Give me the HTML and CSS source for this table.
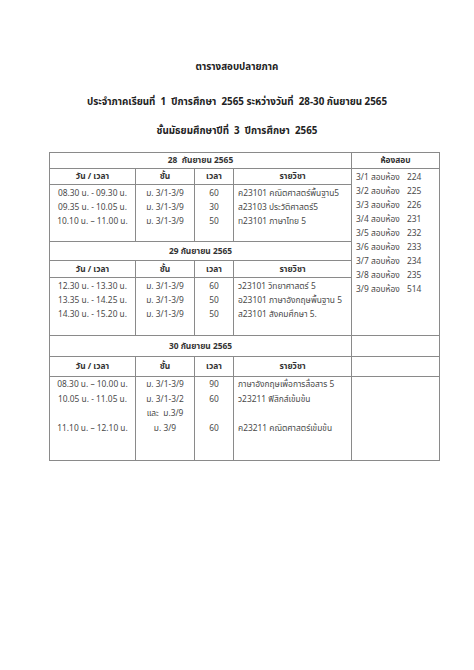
FILE: index.html
```html
<!DOCTYPE html>
<html lang="th">
<head>
<meta charset="utf-8">
<link rel="stylesheet" href="styles.css">
</head>
<body>
<div class="page">
  <h1 class="t1">ตารางสอบปลายภาค</h1>
  <h2 class="t2">ประจำภาคเรียนที่&nbsp; 1&nbsp; ปีการศึกษา&nbsp; 2565 ระหว่างวันที่&nbsp; 28-30 กันยายน 2565</h2>
  <h2 class="t3">ชั้นมัธยมศึกษาปีที่&nbsp; 3&nbsp; ปีการศึกษา&nbsp; 2565</h2>
  <table class="tbl">
    <colgroup>
      <col class="c1"><col class="c2"><col class="c3"><col class="c4"><col class="c5">
    </colgroup>
    <tr class="r-day r1">
      <th colspan="4">28&nbsp; กันยายน 2565</th>
      <th>ห้องสอบ</th>
    </tr>
    <tr class="r-head r2">
      <th>วัน / เวลา</th><th>ชั้น</th><th>เวลา</th><th>รายวิชา</th>
      <td rowspan="5" class="rooms">
        <div><span class="rc">3/1 สอบห้อง</span>224</div>
        <div><span class="rc">3/2 สอบห้อง</span>225</div>
        <div><span class="rc">3/3 สอบห้อง</span>226</div>
        <div><span class="rc">3/4 สอบห้อง</span>231</div>
        <div><span class="rc">3/5 สอบห้อง</span>232</div>
        <div><span class="rc">3/6 สอบห้อง</span>233</div>
        <div><span class="rc">3/7 สอบห้อง</span>234</div>
        <div><span class="rc">3/8 สอบห้อง</span>235</div>
        <div><span class="rc">3/9 สอบห้อง</span>514</div>
      </td>
    </tr>
    <tr class="r-data r3">
      <td class="ctr">08.30 น. - 09.30 น.<br>09.35 น. - 10.05 น.<br>10.10 น. – 11.00 น.</td>
      <td class="ctr">ม. 3/1-3/9<br>ม. 3/1-3/9<br>ม. 3/1-3/9</td>
      <td class="ctr">60<br>30<br>50</td>
      <td class="sub">ค23101 คณิตศาสตร์พื้นฐาน5<br>ส23103 ประวัติศาสตร์5<br>ท23101 ภาษาไทย 5</td>
    </tr>
    <tr class="r-day r4">
      <th colspan="4">29 กันยายน 2565</th>
    </tr>
    <tr class="r-head r5">
      <th>วัน / เวลา</th><th>ชั้น</th><th>เวลา</th><th>รายวิชา</th>
    </tr>
    <tr class="r-data r6">
      <td class="ctr">12.30 น. - 13.30 น.<br>13.35 น. - 14.25 น.<br>14.30 น. - 15.20 น.</td>
      <td class="ctr">ม. 3/1-3/9<br>ม. 3/1-3/9<br>ม. 3/1-3/9</td>
      <td class="ctr">60<br>50<br>50</td>
      <td class="sub">ว23101 วิทยาศาสตร์ 5<br>อ23101 ภาษาอังกฤษพื้นฐาน 5<br>ส23101 สังคมศึกษา 5.</td>
    </tr>
    <tr class="r-day r7">
      <th colspan="4">30 กันยายน 2565</th>
      <td></td>
    </tr>
    <tr class="r-head r8">
      <th>วัน / เวลา</th><th>ชั้น</th><th>เวลา</th><th>รายวิชา</th>
      <td></td>
    </tr>
    <tr class="r-data r9">
      <td class="ctr">08.30 น. – 10.00 น.<br>10.05 น. - 11.05 น.<br>&nbsp;<br>11.10 น. – 12.10 น.</td>
      <td class="ctr">ม. 3/1-3/9<br>ม. 3/1-3/2<br>และ&nbsp; ม.3/9<br>ม. 3/9</td>
      <td class="ctr">90<br>60<br>&nbsp;<br>60</td>
      <td class="sub">ภาษาอังกฤษเพื่อการสื่อสาร 5<br>ว23211 ฟิสิกส์เข้มข้น<br>&nbsp;<br>ค23211 คณิตศาสตร์เข้มข้น</td>
      <td></td>
    </tr>
  </table>
</div>
</body>
</html>
```
FILE: styles.css
```css
html, body {
  margin: 0;
  padding: 0;
  background: #ffffff;
}
body {
  font-family: "Noto Sans Thai", "Loma", "Garuda", "Tahoma", "Noto Sans", sans-serif;
  color: #4a4a4a;
}
.page {
  width: 474px;
  height: 670px;
  padding-top: 58px;
  box-sizing: border-box;
}
.t1, .t2, .t3 {
  margin: 0;
  text-align: center;
  font-weight: bold;
  color: #222;
  font-size: 9.8px;
  line-height: 18px;
}
.t2 { margin-top: 17px; }
.t3 { margin-top: 11px; }
.tbl {
  margin-top: 12px;
  margin-left: 49px;
  width: 390px;
  border-collapse: collapse;
  table-layout: fixed;
  font-size: 8.4px;
}
.c1 { width: 86px; }
.c2 { width: 59px; }
.c3 { width: 39px; }
.c4 { width: 118px; }
.c5 { width: 88px; }
.tbl th, .tbl td {
  border: 1px solid #8a8a8a;
  padding: 0;
  vertical-align: top;
}
.tbl th {
  font-weight: bold;
  color: #333;
  text-align: center;
  vertical-align: middle;
}
.r1 { height: 16px; }
.r2 { height: 16px; }
.r3 { height: 57px; }
.r4 { height: 19px; }
.r5 { height: 17px; }
.r6 { height: 58px; }
.r7 { height: 21px; }
.r8 { height: 20px; }
.r9 { height: 84px; }
.r-data td {
  line-height: 14px;
  padding-top: 2px;
  white-space: nowrap;
}
.r9 td { line-height: 14.5px; padding-top: 1px; }
.ctr { text-align: center; }
.sub { text-align: left; padding-left: 4px !important; }
.rooms {
  padding: 2px 0 0 4px !important;
  line-height: 14px;
  vertical-align: top !important;
  white-space: nowrap;
}
.rc {
  display: inline-block;
  width: 51px;
}
```
